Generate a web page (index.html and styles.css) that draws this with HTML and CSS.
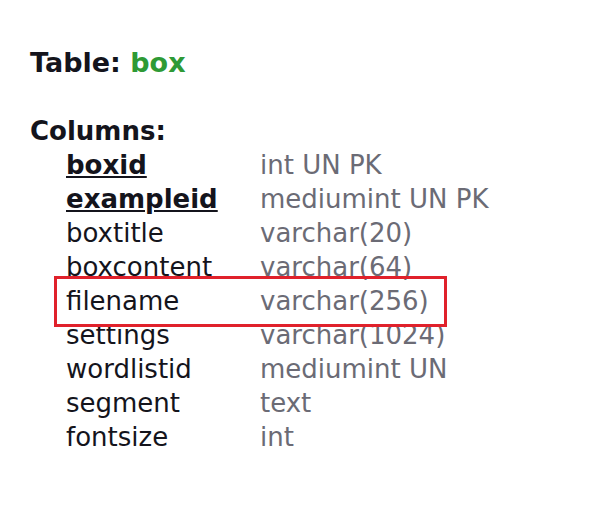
FILE: index.html
```html
<!DOCTYPE html>
<html lang="en">
<head>
    <meta charset="UTF-8">
    <title>Table: box</title>
    <link rel="stylesheet" href="styles.css">
</head>
<body>

    <div class="table-info">
        <p class="table-name">Table: <span class="name">box</span></p>

        <p class="heading">Columns:</p>
        <div class="columns">
            <div class="col"><span class="col-name key">boxid</span><span class="col-type">int UN PK</span></div>
            <div class="col"><span class="col-name key">exampleid</span><span class="col-type">mediumint UN PK</span></div>
            <div class="col"><span class="col-name">boxtitle</span><span class="col-type">varchar(20)</span></div>
            <div class="col"><span class="col-name">boxcontent</span><span class="col-type">varchar(64)</span></div>
            <div class="col marked"><span class="col-name">filename</span><span class="col-type">varchar(256)</span></div>
            <div class="col"><span class="col-name">settings</span><span class="col-type">varchar(1024)</span></div>
            <div class="col"><span class="col-name">wordlistid</span><span class="col-type">mediumint UN</span></div>
            <div class="col"><span class="col-name">segment</span><span class="col-type">text</span></div>
            <div class="col"><span class="col-name">fontsize</span><span class="col-type">int</span></div>
        </div>
    </div>

</body>
</html>
```

FILE: styles.css
```css
body {
    margin: 0;
    background: #ffffff;
    color: #14141c;
    font-family: Tahoma, "DejaVu Sans", sans-serif;
    font-size: 26px;
    line-height: 34px;
}

.table-info {
    padding: 46px 0 0 30px;
}

.table-info p {
    margin: 0;
    font-weight: bold;
}

.table-name {
    font-size: 27px;
    margin-bottom: 34px !important;
}

.table-name .name {
    color: #2e9a35;
}

.columns {
    padding-left: 36px;
}

.col {
    display: grid;
    grid-template-columns: 194px auto;
    white-space: nowrap;
}

.col-name.key {
    font-weight: bold;
    text-decoration: underline;
}

.col-type {
    color: #6b6b75;
}

.col.marked {
    position: relative;
}

.col.marked::after {
    content: "";
    position: absolute;
    left: -12px;
    top: -8px;
    width: 387px;
    height: 45px;
    border: 3px solid #e0212b;
}
```
